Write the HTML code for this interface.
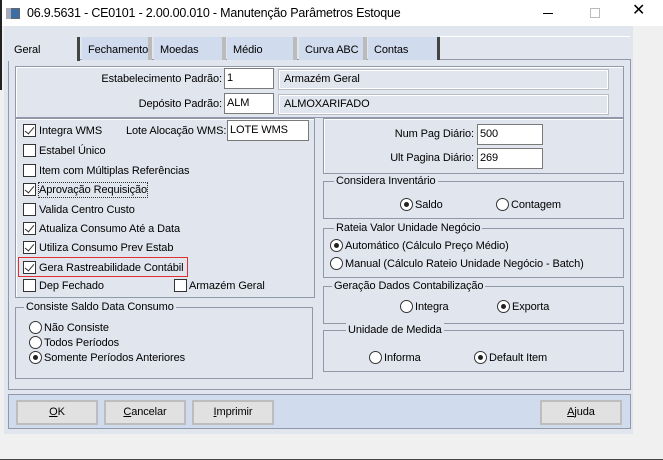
<!DOCTYPE html>
<html><head><meta charset="utf-8"><style>
*{box-sizing:border-box;margin:0;padding:0}
body{width:663px;height:460px;background:#f0f0f0;font-family:"Liberation Sans",sans-serif;font-size:11px;letter-spacing:-0.1px;color:#000;position:relative;overflow:hidden}
.a{position:absolute}
.t{position:absolute;white-space:nowrap;line-height:14px}
.box{position:absolute;border:1px solid #8f99aa;box-shadow:inset 1px 1px 0 #fff}
.grp{position:absolute;border:1px solid #8f99aa}
.gl{position:absolute;background:#e1e5ee;padding:0 2px;white-space:nowrap;line-height:14px;top:-8px}
.inp{position:absolute;background:#fff;border:1px solid #7a7a7a;padding-left:2px;line-height:18px;white-space:nowrap}
.ro{position:absolute;border:1px solid #fff;outline:1px solid #b8bcc4;background:#e1e5ee;padding-left:4px;line-height:17px}
.cb{position:absolute;width:13px;height:13px;border:1px solid #333;background:#fff}
.cb.c::after{content:"";position:absolute;left:3px;top:0px;width:4px;height:8px;border:solid #333;border-width:0 1.5px 1.5px 0;transform:rotate(40deg)}
.rb{position:absolute;width:13px;height:13px;border:1px solid #333;border-radius:50%;background:#fff}
.rb.c::after{content:"";position:absolute;left:3px;top:3px;width:5px;height:5px;border-radius:50%;background:#222}
.tab{position:absolute;top:37px;height:23px;background:#d1dbee;border-right:4px solid #bbb;padding:6px 0 0 6px;line-height:14px;white-space:nowrap;overflow:hidden}
.btn{position:absolute;top:400px;height:25px;background:#e1e1e1;border:2px solid #bdbdbd;text-align:center;line-height:20px}
</style></head><body>
<div class="a" style="left:0;top:0;width:663px;height:26px;background:#fff"></div>
<div class="a" style="left:0;top:0;width:2px;height:90px;background:#222"></div>
<div class="a" style="left:6px;top:8px;width:14px;height:11px;background:#3a6ea5;border:1px solid #666"></div>
<div class="a" style="left:6px;top:8px;width:5px;height:11px;background:#aab"></div>
<div class="t" style="left:27px;top:6px;font-size:12.5px;letter-spacing:-0.2px">06.9.5631 - CE0101 - 2.00.00.010 - Manutenção Parâmetros Estoque</div>
<div class="a" style="left:543px;top:13px;width:10px;height:1px;background:#000"></div>
<div class="a" style="left:590px;top:8px;width:10px;height:10px;border:1px solid #bbb"></div>
<div class="t" style="left:632px;top:4px;font-size:16px">✕</div>
<div class="a" style="left:4px;top:26px;width:629px;height:408px;background:#e1e5ee"></div>
<div class="a" style="left:8px;top:59px;width:623px;height:331px;border:1px solid #8f99aa;background:#e1e5ee"></div>
<div class="tab" style="left:8px;width:72px;background:#e1e5ee;border-right:3px solid #444;height:24px">Geral</div>
<div class="tab" style="left:82px;width:70px">Fechamento</div>
<div class="tab" style="left:154px;width:72px">Moedas</div>
<div class="tab" style="left:227px;width:70px">Médio</div>
<div class="tab" style="left:299px;width:68px">Curva ABC</div>
<div class="tab" style="left:368px;width:72px;border-right:3px solid #444">Contas</div>
<div class="a" style="left:440px;top:36px;width:190px;height:1px;background:#fff"></div>

<div class="box" style="left:15px;top:66px;width:609px;height:52px"></div>
<div class="t" style="left:80px;top:72px;width:142px;text-align:right">Estabelecimento Padrão:</div>
<div class="inp" style="left:224px;top:68px;width:50px;height:21px">1</div>
<div class="ro" style="left:279px;top:70px;width:329px;height:19px">Armazém Geral</div>
<div class="t" style="left:80px;top:97px;width:142px;text-align:right">Depósito Padrão:</div>
<div class="inp" style="left:224px;top:93px;width:50px;height:21px">ALM</div>
<div class="ro" style="left:279px;top:95px;width:329px;height:19px">ALMOXARIFADO</div>

<div class="box" style="left:15px;top:118px;width:300px;height:180px"></div>
<div class="box" style="left:323px;top:118px;width:301px;height:56px"></div>

<div class="cb c" style="left:23px;top:124px"></div><div class="t" style="left:39px;top:124px">Integra WMS</div>
<div class="t" style="left:126px;top:124px">Lote Alocação WMS:</div>
<div class="inp" style="left:227px;top:120px;width:82px;height:21px">LOTE WMS</div>
<div class="cb" style="left:23px;top:144px"></div><div class="t" style="left:39px;top:144px">Estabel Único</div>
<div class="cb" style="left:23px;top:164px"></div><div class="t" style="left:39px;top:164px">Item com Múltiplas Referências</div>
<div class="cb c" style="left:23px;top:183px"></div><div class="t" style="left:39px;top:183px;outline:1px dotted #333">Aprovação Requisição</div>
<div class="cb" style="left:23px;top:203px"></div><div class="t" style="left:39px;top:203px">Valida Centro Custo</div>
<div class="cb c" style="left:23px;top:222px"></div><div class="t" style="left:39px;top:222px">Atualiza Consumo Até a Data</div>
<div class="cb c" style="left:23px;top:241px"></div><div class="t" style="left:39px;top:241px">Utiliza Consumo Prev Estab</div>
<div class="a" style="left:18px;top:257px;width:170px;height:20px;border:1px solid #e03030"></div>
<div class="cb c" style="left:23px;top:261px"></div><div class="t" style="left:39px;top:261px">Gera Rastreabilidade Contábil</div>
<div class="cb" style="left:23px;top:279px"></div><div class="t" style="left:39px;top:279px">Dep Fechado</div>
<div class="cb" style="left:174px;top:279px"></div><div class="t" style="left:189px;top:279px">Armazém Geral</div>

<div class="grp" style="left:15px;top:307px;width:298px;height:72px"><div class="gl" style="left:8px">Consiste Saldo Data Consumo</div></div>
<div class="rb" style="left:29px;top:321px"></div><div class="t" style="left:44px;top:321px">Não Consiste</div>
<div class="rb" style="left:29px;top:336px"></div><div class="t" style="left:44px;top:336px">Todos Períodos</div>
<div class="rb c" style="left:29px;top:351px"></div><div class="t" style="left:44px;top:351px">Somente Períodos Anteriores</div>

<div class="t" style="left:370px;top:127px;width:104px;text-align:right">Num Pag Diário:</div>
<div class="inp" style="left:477px;top:124px;width:66px;height:21px">500</div>
<div class="t" style="left:360px;top:151px;width:114px;text-align:right">Ult Pagina Diário:</div>
<div class="inp" style="left:477px;top:148px;width:66px;height:21px">269</div>

<div class="grp" style="left:323px;top:181px;width:301px;height:38px"><div class="gl" style="left:10px">Considera Inventário</div></div>
<div class="rb c" style="left:400px;top:198px"></div><div class="t" style="left:415px;top:198px">Saldo</div>
<div class="rb" style="left:496px;top:198px"></div><div class="t" style="left:511px;top:198px">Contagem</div>

<div class="grp" style="left:323px;top:228px;width:301px;height:50px"><div class="gl" style="left:10px">Rateia Valor Unidade Negócio</div></div>
<div class="rb c" style="left:330px;top:239px"></div><div class="t" style="left:345px;top:239px">Automático (Cálculo Preço Médio)</div>
<div class="rb" style="left:330px;top:257px"></div><div class="t" style="left:345px;top:257px">Manual (Cálculo Rateio Unidade Negócio - Batch)</div>

<div class="grp" style="left:323px;top:286px;width:301px;height:38px"><div class="gl" style="left:8px">Geração Dados Contabilização</div></div>
<div class="rb" style="left:400px;top:300px"></div><div class="t" style="left:415px;top:300px">Integra</div>
<div class="rb c" style="left:497px;top:300px"></div><div class="t" style="left:512px;top:300px">Exporta</div>

<div class="grp" style="left:323px;top:330px;width:301px;height:42px"><div class="gl" style="left:22px">Unidade de Medida</div></div>
<div class="rb" style="left:369px;top:351px"></div><div class="t" style="left:384px;top:351px">Informa</div>
<div class="rb c" style="left:474px;top:351px"></div><div class="t" style="left:489px;top:351px">Default Item</div>

<div class="a" style="left:8px;top:394px;width:623px;height:35px;background:#d1dbee;border:1px solid #8f99aa"></div>
<div class="btn" style="left:16px;width:82px"><u>O</u>K</div>
<div class="btn" style="left:104px;width:82px"><u>C</u>ancelar</div>
<div class="btn" style="left:192px;width:82px"><u>I</u>mprimir</div>
<div class="btn" style="left:540px;width:82px"><u>A</u>juda</div>
<div class="a" style="left:0;top:459px;width:663px;height:1px;background:#444"></div>
</body></html>
